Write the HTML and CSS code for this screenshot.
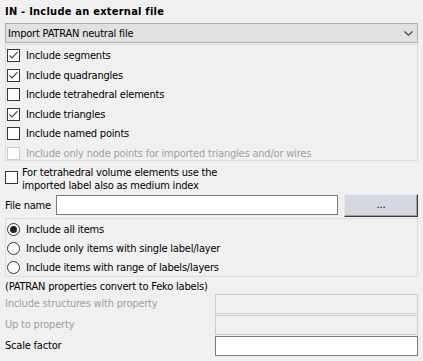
FILE: index.html
```html
<!DOCTYPE html>
<html>
<head>
<meta charset="utf-8">
<link rel="stylesheet" href="styles.css">
</head>
<body>
<div class="panel">
  <div class="title">IN - Include an external file</div>
  <div class="combo">
    <span>Import PATRAN neutral file</span>
    <svg class="chev" width="9" height="5" viewBox="0 0 9 5"><path d="M0.5 0.5 L4.5 4.2 L8.5 0.5" fill="none" stroke="#444" stroke-width="1.2"/></svg>
  </div>
  <div class="group g1">
    <div class="row"><span class="cb"><svg width="11" height="11" viewBox="0 0 11 11"><path d="M1.5 5.5 L4 8 L9.5 2.2" fill="none" stroke="#444" stroke-width="1.1"/></svg></span><span>Include segments</span></div>
    <div class="row"><span class="cb"><svg width="11" height="11" viewBox="0 0 11 11"><path d="M1.5 5.5 L4 8 L9.5 2.2" fill="none" stroke="#444" stroke-width="1.1"/></svg></span><span>Include quadrangles</span></div>
    <div class="row"><span class="cb"></span><span>Include tetrahedral elements</span></div>
    <div class="row"><span class="cb"><svg width="11" height="11" viewBox="0 0 11 11"><path d="M1.5 5.5 L4 8 L9.5 2.2" fill="none" stroke="#444" stroke-width="1.1"/></svg></span><span>Include triangles</span></div>
    <div class="row"><span class="cb"></span><span>Include named points</span></div>
    <div class="row disabled"><span class="cb"></span><span>Include only node points for imported triangles and/or wires</span></div>
  </div>
  <div class="tetra">
    <span class="cb"></span>
    <span class="tetra-text">For tetrahedral volume elements use the<br>imported label also as medium index</span>
  </div>
  <div class="file-row">
    <span class="file-label">File name</span>
    <div class="input"></div>
    <div class="btn">...</div>
  </div>
  <div class="group g2">
    <div class="row"><span class="rb on"></span><span>Include all items</span></div>
    <div class="row"><span class="rb"></span><span>Include only items with single label/layer</span></div>
    <div class="row"><span class="rb"></span><span>Include items with range of labels/layers</span></div>
  </div>
  <div class="note">(PATRAN properties convert to Feko labels)</div>
  <div class="fields">
    <span class="flabel disabled">Include structures with property</span>
    <div class="input off"></div>
    <span class="flabel disabled">Up to property</span>
    <div class="input off"></div>
    <span class="flabel">Scale factor</span>
    <div class="input"></div>
  </div>
</div>
</body>
</html>
```

FILE: styles.css
```css
* { box-sizing: border-box; }
html, body {
  margin: 0;
  padding: 0;
  background: #f0f0f0;
}
body {
  font-family: "DejaVu Sans Condensed", "DejaVu Sans", sans-serif;
  font-size: 11px;
  letter-spacing: -0.2px;
  color: #000;
  width: 423px;
  height: 361px;
  overflow: hidden;
}
.panel {
  padding: 0 5px;
  display: flex;
  flex-direction: column;
}
.title {
  font-weight: bold;
  letter-spacing: 0.24px;
  height: 23px;
  line-height: 23px;
}
.combo {
  height: 20px;
  border: 1px solid #adadad;
  background: #e1e1e1;
  display: flex;
  align-items: center;
  justify-content: space-between;
  padding: 0 4px 0 2px;
}
.chev { display: block; margin-top: 1px; }
.group {
  border: 1px solid #dcdcdc;
  display: flex;
  flex-direction: column;
  padding-left: 1px;
}
.g1 {
  margin-top: 1px;
  padding-top: 4px;
  padding-bottom: 0;
  gap: 6.6px;
}
.g2 {
  margin-top: 1px;
  padding-top: 4px;
  padding-bottom: 2px;
  gap: 6px;
}
.row {
  height: 13px;
  display: flex;
  align-items: center;
  gap: 6px;
  white-space: nowrap;
}
.cb {
  width: 13px;
  height: 13px;
  border: 1px solid #333;
  background: #fff;
  flex: none;
  display: flex;
  align-items: center;
  justify-content: center;
}
.cb svg { display: block; }
.disabled { color: #a0a0a0; }
.disabled .cb { border-color: #cccccc; background: #fff; }
.rb {
  width: 13px;
  height: 13px;
  border: 1px solid #333;
  border-radius: 50%;
  background: #fff;
  flex: none;
  display: flex;
  align-items: center;
  justify-content: center;
}
.rb.on::after {
  content: "";
  width: 7px;
  height: 7px;
  border-radius: 50%;
  background: #222;
}
.tetra {
  margin-top: 5px;
  display: flex;
  align-items: center;
  gap: 4px;
}
.tetra .cb { margin-top: -2px; }
.tetra-text {
  line-height: 13px;
}
.file-row {
  margin-top: 2px;
  height: 23px;
  display: flex;
  align-items: center;
}
.file-label {
  width: 51px;
  flex: none;
}
.input {
  height: 20px;
  border: 1px solid #7a7a7a;
  background: #fff;
}
.file-row .input { flex: 1; }
.input.off {
  border-color: #cccccc;
  background: #f0f0f0;
}
.btn {
  width: 74px;
  height: 23px;
  margin-left: 6px;
  flex: none;
  background: #d5d8e1;
  border-top: 1px solid #e6e6e6;
  border-left: 1px solid #e6e6e6;
  border-right: 1px solid #3a3a3a;
  border-bottom: 1px solid #3a3a3a;
  box-shadow: inset -1px -1px 0 #a0a0a0;
  display: flex;
  align-items: center;
  justify-content: center;
  padding-bottom: 1px;
}
.note {
  margin-top: 3px;
  height: 14px;
  line-height: 14px;
}
.fields {
  display: grid;
  grid-template-columns: 1fr 203px;
  grid-auto-rows: 20px;
  row-gap: 1px;
}
.flabel {
  display: flex;
  align-items: center;
}
```
